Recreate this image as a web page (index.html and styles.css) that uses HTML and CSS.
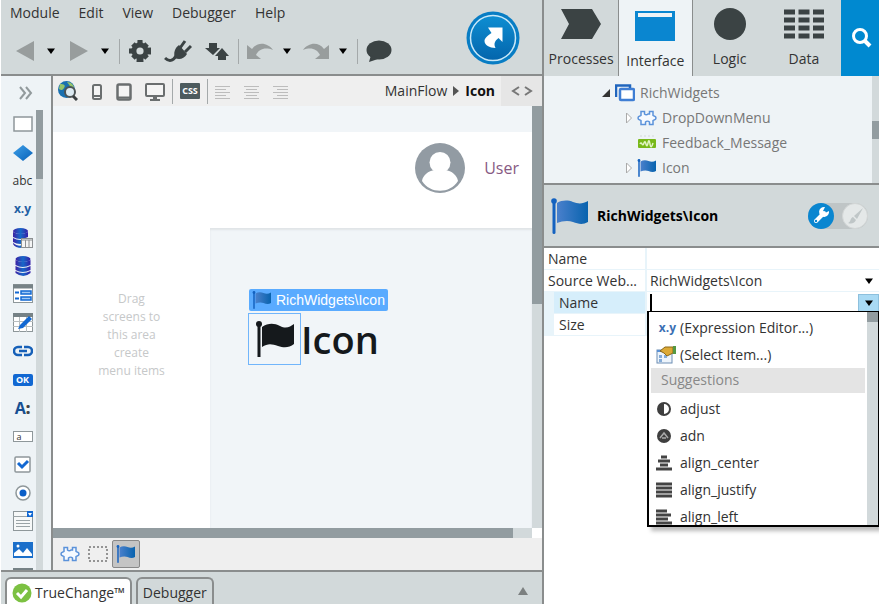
FILE: index.html
```html
<!DOCTYPE html>
<html lang="en">
<head>
  <meta charset="UTF-8" />
  <meta name="viewport" content="width=device-width, initial-scale=1.0"/>
  <title>Module - Icon</title>
  <link rel="stylesheet" href="styles.css">
</head>
<body>

  <!-- shared icons -->
  <svg class="sprite" aria-hidden="true">
    <defs>
      <linearGradient id="flagBlue" x1="0" x2="1"><stop offset="0" stop-color="#4a80cc"/><stop offset="1" stop-color="#0863ae"/></linearGradient>
      <linearGradient id="gemBlue" x1="0" x2="1" y2="1"><stop offset="0" stop-color="#3fa0e8"/><stop offset="1" stop-color="#0660b8"/></linearGradient>
      <linearGradient id="publishBlue" y2="1" x2="0"><stop offset="0" stop-color="#0e8ed2"/><stop offset="1" stop-color="#0465ac"/></linearGradient>
      <linearGradient id="dbBlue" x1="0" x2="1"><stop offset="0" stop-color="#3c22a4"/><stop offset=".5" stop-color="#1768c8"/><stop offset="1" stop-color="#3420a8"/></linearGradient>
    </defs>
    <symbol id="flag" viewBox="0 0 38 36">
      <rect x="1.500" y="3" width="3" height="33" rx="1.500" fill="#1462c0"/>
      <circle cx="3" cy="3" r="2.800" fill="#1462c0"/>
      <path d="M6 5C11 2 17 2 22 4s10 2 15-1v21c-5 3-10 2-15 0s-11-1-16 1z" fill="url(#flagBlue)"/>
    </symbol>
    <symbol id="flag-dark" viewBox="0 0 38 36">
      <rect x="1.500" y="3" width="3" height="33" fill="#15191c"/>
      <circle cx="3" cy="3" r="3" fill="#15191c"/>
      <path d="M6 6C12 2 18 2 24 5s10 1 14-2v20c-5 4-10 4-16 2s-10-3-16 1z" fill="#15191c"/>
    </symbol>
    <symbol id="puzzle" viewBox="0 0 20 16">
      <path d="M4 1.500h3.500v2.500c1 1 2.500 1 3.500 0h1.500V1.500H16v4c.5 1 3 0 3 2.500s-2.500 1.500-3 2.500v4h-3.500V12c-1-1-3-1-4 0v2.500H4v-4c-.5-1-3 0-3-2.500s2.500-1.500 3-2.500z" fill="#f6faff" stroke="#5b92da" stroke-width="1.500"/>
    </symbol>
    <symbol id="down" viewBox="0 0 8 6"><path d="M0 .5h8L4 6z" fill="#000"/></symbol>
  </svg>

  <div class="studio">
    <main class="workspace">

      <header class="topbar">
        <div class="topbar-main">
          <nav class="menu">
            <button>Module</button>
            <button>Edit</button>
            <button>View</button>
            <button>Debugger</button>
            <button>Help</button>
          </nav>
          <div class="tools">
            <button aria-label="Back"><svg width="20" height="22"><path d="M1 11 19 1v20z" fill="#989d9d"/></svg></button>
            <button class="narrow" aria-label="Back history"><svg width="8" height="6"><use href="#down"/></svg></button>
            <button aria-label="Forward"><svg width="20" height="22"><path d="M19 11 1 1v20z" fill="#989d9d"/></svg></button>
            <button class="narrow" aria-label="Forward history"><svg width="8" height="6"><use href="#down"/></svg></button>
            <span class="divider"></span>
            <button aria-label="Settings"><svg width="24" height="24" viewBox="0 0 24 24"><g fill="#3b4344"><path d="M9.500 1h5l1 22h-7zM1 9.500v5l22 1v-7z"/><path d="M9.500 2h5v20h-5zM2 9.500h20v5H2z" transform="rotate(45 12 12)"/><circle cx="12" cy="12" r="8.500"/></g><circle cx="12" cy="12" r="3.600" fill="#d2d9da"/></svg></button>
            <button aria-label="Connect"><svg width="28" height="24" viewBox="0 0 28 24"><path d="M1 19c4 4 8 3 11-2" fill="none" stroke="#3b4344" stroke-width="3"/><path d="m15 6 8 9c-3 5-8 6-12 4-2-5 0-10 4-13z" fill="#3b4344"/><path d="m16 9 5-7m0 11 6-6" stroke="#3b4344" stroke-width="3"/></svg></button>
            <button aria-label="Merge"><svg width="26" height="24" viewBox="0 0 26 24"><path d="M5 4h8v5h3l-7 7-8-7h4zM18 9l7 8h-3v4h-8v-4h-3z" fill="#3b4344"/></svg></button>
            <span class="divider"></span>
            <div class="history">
              <button aria-label="Undo"><svg width="26" height="18" viewBox="0 0 26 18"><path d="M0 3v14h14l-5-4c3-6 9-8 17-5C21 1 11-1 5 7z" fill="#989d9d"/></svg></button>
              <button class="narrow" aria-label="Undo history"><svg width="8" height="6"><use href="#down"/></svg></button>
              <button aria-label="Redo"><svg width="26" height="18" viewBox="0 0 26 18"><path d="M26 3v14H12l5-4C14 7 8 5 0 8 5 1 15-1 21 7z" fill="#989d9d"/></svg></button>
              <button class="narrow" aria-label="Redo history"><svg width="8" height="6"><use href="#down"/></svg></button>
            </div>
            <span class="divider"></span>
            <button aria-label="Feedback"><svg width="26" height="22" viewBox="0 0 26 22"><ellipse cx="13" cy="10" rx="12.500" ry="9.500" fill="#3b4344"/><path d="m5 15-2 7 9-3z" fill="#3b4344"/></svg></button>
          </div>
        </div>
        <button class="publish" aria-label="Publish">
          <svg width="54" height="54" viewBox="0 0 54 54"><circle cx="27" cy="27" r="26.500" fill="#087dc4"/><circle cx="27" cy="27" r="22.500" fill="url(#publishBlue)" stroke="#c9e8f8" stroke-width="1.500"/><path d="M22 16.500h14.500V31l-4-4c-4 3-5 6-3 10-6 0-11-3-11-7 0-3 3-5 7-8z" fill="#fff"/></svg>
        </button>
      </header>

      <div class="editor">
        <aside class="palette">
          <button class="expand" aria-label="Expand toolbox"><svg width="14" height="14"><path d="m1 1 5 6-5 6M7 1l5 6-5 6" fill="none" stroke="#929a9c" stroke-width="2"/></svg></button>
          <div class="palette-body">
            <div class="widgets">
              <button aria-label="Container"><svg width="20" height="20"><rect x="1" y="3" width="18" height="14" fill="#fff" stroke="#8e979a" stroke-width="1.500"/></svg></button>
              <button aria-label="If"><svg width="20" height="20"><path d="m10 2 10 8-10 8-10-8z" fill="url(#gemBlue)"/></svg></button>
              <button class="word">abc</button>
              <button class="word expr">x.y</button>
              <button aria-label="Table records"><svg width="20" height="20"><g fill="url(#dbBlue)"><ellipse cx="7.500" cy="3" rx="7.500" ry="3"/><path d="M0 4q7 4 15 0v5q-8 4-15 0zM0 10q7 4 15 0v4q-8 4-15 0zM0 15q5 4 9 2v3q-7 0-9-4z"/></g><rect x="8.500" y="10.500" width="11" height="9" fill="#f4f5f5" stroke="#8c9092"/><path d="M8 12h12M12.500 12v8M16 12v8" stroke="#8c9092"/></svg></button>
              <button aria-label="List records"><svg width="20" height="20"><g fill="url(#dbBlue)"><ellipse cx="10" cy="3" rx="7.500" ry="3"/><path d="M2.500 4q7 4 15 0v5q-8 4-15 0zM2.500 10q7 4 15 0v4q-8 4-15 0zM2.500 15q7 4 15 0v2q-7 6-15 0z"/></g></svg></button>
              <button aria-label="Form"><svg width="20" height="20"><rect x=".5" y=".5" width="19" height="18" fill="#fff" stroke="#8e979a"/><path d="M0 2.500h20" stroke="#768286" stroke-width="4"/><g fill="#9fc8f4" stroke="#1268d2" stroke-width="1.500"><rect x="8" y="7" width="10" height="3"/><rect x="8" y="13" width="10" height="3"/></g><path d="M2 8.500h4m-4 6h4" stroke="#1268d2" stroke-width="2"/></svg></button>
              <button aria-label="Edit record"><svg width="20" height="20"><rect x=".5" y=".5" width="19" height="18" fill="#fff" stroke="#8e979a"/><path d="M6.500 2v17M13.500 2v17M0 8.500h20M0 13.500h20" stroke="#b8bec0"/><path d="M0 2h20" stroke="#768286" stroke-width="4"/><path d="m5 16 2-4 9-9 3 3-9 9z" fill="#1268d2"/></svg></button>
              <button aria-label="Link"><svg width="20" height="12"><path d="M9 2H5a4 4 0 0 0 0 8h4m2-8h4a4 4 0 0 1 0 8h-4M6 6h8" fill="none" stroke="#1660b8" stroke-width="2.500"/></svg></button>
              <button aria-label="Button"><span class="ok">OK</span></button>
              <button class="word label">A<b>:</b></button>
              <button aria-label="Input"><span class="field">a</span></button>
              <button aria-label="Check Box"><svg width="18" height="18"><rect x="1" y="1" width="15" height="15" rx="1" fill="#fff" stroke="#8e979a" stroke-width="1.500"/><path d="m4 7 4 4 6-6" fill="none" stroke="#1268d2" stroke-width="3"/></svg></button>
              <button aria-label="Radio Button"><svg width="18" height="18"><circle cx="9" cy="9" r="7" fill="#fff" stroke="#8e979a" stroke-width="1.500"/><circle cx="9" cy="9" r="3.500" fill="#0b5fc8"/></svg></button>
              <button aria-label="Combo Box"><svg width="20" height="20"><rect x=".5" y=".5" width="19" height="19" fill="#f6f8f8" stroke="#8e979a"/><path d="M0 5.500h20M3 9.500h14M3 12.500h14M3 15.500h14" stroke="#9aa3a6"/><path d="M14 0h6v6h-6z" fill="#1268d2"/><path d="M15 2h4l-2 3z" fill="#fff"/></svg></button>
              <button aria-label="Image"><svg width="20" height="16"><path d="M0 0h20v16H0z" fill="#1b6fca"/><path d="M1 14v-3l5-4 4 4 4-5 5 6v2z" fill="#fff"/><circle cx="5" cy="4" r="1.500" fill="#fff"/></svg></button>
              <span class="next"></span>
            </div>
            <div class="bar"><div class="thumb"></div></div>
          </div>
        </aside>

        <section class="screen">
          <div class="screen-tools">
            <button aria-label="Preview"><svg width="20" height="20"><circle cx="8.500" cy="8.500" r="8.500" fill="#1970b0"/><path d="M2 3c4 0 6 1 4 4s-3 2-5 1M9 1c4 0 7 3 7 6l-4-2z" fill="#94c46c"/><circle cx="12" cy="11" r="5" fill="#dceaf2" stroke="#4d5456" stroke-width="2"/><path d="m15 15 4 4" stroke="#3b4042" stroke-width="3"/></svg></button>
            <button aria-label="Phone"><svg width="12" height="20"><rect x="2" y="4" width="8" height="14" rx="1.500" fill="#f4f4f4" stroke="#6a6e6f" stroke-width="2"/><path d="M2 15h8" stroke="#6a6e6f" stroke-width="2"/></svg></button>
            <button aria-label="Tablet"><svg width="16" height="20"><rect x="1.500" y="3.500" width="13" height="15" rx="1.500" fill="#f4f4f4" stroke="#6a6e6f" stroke-width="2.500"/><path d="M1 16.500h14" stroke="#6a6e6f" stroke-width="2"/></svg></button>
            <button aria-label="Desktop"><svg width="20" height="20"><rect x="1" y="3" width="18" height="12" rx="1" fill="#f4f4f4" stroke="#6a6e6f" stroke-width="2"/><path d="M8 15h4v3h3v2H5v-2h3z" fill="#6a6e6f"/></svg></button>
            <span class="divider"></span>
            <button class="css">CSS</button>
            <span class="divider"></span>
            <button aria-label="Align left"><svg width="16" height="18"><path d="M0 4.500h15M0 7.500h11M0 10.500h15M0 13.500h11M0 16.500h15" stroke="#bcbcbc"/></svg></button>
            <button aria-label="Align center"><svg width="16" height="18"><path d="M0 4.500h15M2 7.500h11M0 10.500h15M2 13.500h11M0 16.500h15" stroke="#bcbcbc"/></svg></button>
            <button aria-label="Align right"><svg width="16" height="18"><path d="M0 4.500h15M4 7.500h11M0 10.500h15M4 13.500h11M0 16.500h15" stroke="#bcbcbc"/></svg></button>
            <div class="crumbs">MainFlow <svg width="6" height="10"><path d="M0 0v10l6-5z" fill="#555"/></svg> <strong>Icon</strong></div>
            <button class="source" aria-label="Source"><svg width="22" height="10"><path d="M8 1 2 5l6 4M14 1l6 4-6 4" fill="none" stroke="#777" stroke-width="2"/></svg></button>
          </div>

          <div class="viewport">
            <div class="page">
              <div class="page-header">
                <svg width="52" height="52" viewBox="0 0 52 52"><circle cx="26" cy="26" r="25" fill="#929ba3"/><circle cx="26" cy="20.500" r="10.500" fill="#fff"/><path d="M8 39c1-6 6-10 13-11l1-3h8l1 3c7 1 12 5 13 11-8 13-28 13-36 0z" fill="#fff"/></svg>
                <a href="#">User</a>
              </div>
              <div class="page-body">
                <div class="drop-area">Drag<br>screens to<br>this area<br>create<br>menu items</div>
                <div class="content">
                  <div class="tag"><svg width="20" height="18"><use href="#flag"/></svg>RichWidgets\Icon</div>
                  <h1><span class="selected"><svg width="40" height="36"><use href="#flag-dark"/></svg></span>Icon</h1>
                </div>
              </div>
            </div>
            <div class="bar tall"><div class="thumb"></div></div>
            <div class="bar wide"><div class="thumb"></div></div>
          </div>

          <div class="element-path">
            <button aria-label="Block"><svg width="20" height="16"><use href="#puzzle"/></svg></button>
            <button aria-label="Placeholder"><svg width="20" height="16"><rect x="1" y="1" width="18" height="14" fill="none" stroke="#777" stroke-width="1.500" stroke-dasharray="2"/></svg></button>
            <button class="active" aria-label="Icon"><svg width="20" height="18"><use href="#flag"/></svg></button>
          </div>
        </section>
      </div>

      <footer class="tabs">
        <button class="tab open"><svg width="20" height="20"><circle cx="10" cy="10" r="9.500" fill="#7cc142"/><path d="m5 10 4 4 6-7" fill="none" stroke="#fff" stroke-width="3"/></svg>TrueChange™</button>
        <button class="tab">Debugger</button>
        <button class="collapse" aria-label="Expand"><svg width="10" height="8"><path d="M0 8h10L5 0z" fill="#7c8080"/></svg></button>
      </footer>
    </main>

    <aside class="inspector">
      <nav class="layers">
        <button><svg width="40" height="32"><path d="M0 1h31l9 15-9 15H0l8-15z" fill="#3b4344"/></svg>Processes</button>
        <button class="current"><svg width="40" height="32"><path d="M0 1h40v30H0z" fill="#0a86d0"/><path d="M3 3h34v4H3z" fill="#eef3f6"/></svg>Interface</button>
        <button><svg width="40" height="32"><circle cx="20" cy="16" r="16" fill="#3b4344"/></svg>Logic</button>
        <button><svg width="40" height="32"><path d="M0 4h40M0 12h40M0 20h40M0 28h40" stroke="#3b4344" stroke-width="5" stroke-dasharray="11 3.500"/></svg>Data</button>
        <button class="search" aria-label="Search"><svg width="22" height="22"><circle cx="9" cy="9" r="6.500" fill="none" stroke="#fff" stroke-width="3"/><path d="m13 13 6 6" stroke="#fff" stroke-width="4"/></svg></button>
      </nav>

      <div class="tree-pane">
        <ul class="tree">
          <li><svg class="arrow" width="8" height="10"><path d="M8 1v8H0z" fill="#333"/></svg><svg width="20" height="18"><path d="M1 13V1.500h14V4" fill="none" stroke="#2065bd" stroke-width="2.500"/><rect x="5" y="5" width="14" height="11" rx="1" fill="#fff" stroke="#3f7ed4" stroke-width="2.500"/></svg>RichWidgets</li>
          <li class="child"><svg class="arrow" width="6" height="12"><path d="M.5 1v10l5-5z" fill="#fff" stroke="#aaa"/></svg><svg width="20" height="16"><use href="#puzzle"/></svg>DropDownMenu</li>
          <li class="child"><span class="arrow"></span><svg width="20" height="16"><rect x="1" y="4" width="18" height="9" rx="1" fill="#78b81a"/><path d="M3 9q1-2 2 0t2-1 2 1 2-1 2 1 3-1" fill="none" stroke="#e2f4c4" stroke-width="1.500"/><path d="M3 1h14" stroke="#d4d8da" stroke-dasharray="2"/></svg>Feedback_Message</li>
          <li class="child"><svg class="arrow" width="6" height="12"><path d="M.5 1v10l5-5z" fill="#fff" stroke="#aaa"/></svg><svg width="20" height="18"><use href="#flag"/></svg>Icon</li>
        </ul>
        <div class="bar"><div class="thumb"></div></div>
      </div>

      <div class="properties-head">
        <svg width="38" height="36"><use href="#flag"/></svg>
        <h2>RichWidgets\Icon</h2>
        <div class="switch">
          <button aria-label="Properties"><svg width="26" height="26"><circle cx="13" cy="13" r="13" fill="#0a86d0"/><path d="m8 18 8-8" stroke="#fff" stroke-width="4" stroke-linecap="round"/><path d="M21 8a5 5 0 1 1-4-4l-2 4 2 2z" fill="#fff"/><circle cx="8" cy="18" r="1.200" fill="#0a86d0"/></svg></button>
          <button aria-label="Styles"><svg width="26" height="26"><circle cx="13" cy="13" r="12.500" fill="#e4e8e8" stroke="#d2d6d6"/><path d="m21 5-9 8 3 3zM11 14l3 3c-2 4-5 4-8 3 3-1 2-5 5-6z" fill="#bfc6c7"/></svg></button>
        </div>
      </div>

      <div class="properties">
        <table>
          <tr>
            <th><label for="name">Name</label></th>
            <td><input id="name" type="text"></td>
          </tr>
          <tr>
            <th><label for="source">Source Web...</label></th>
            <td><div class="combo"><select id="source"><option>RichWidgets\Icon</option></select><svg width="8" height="8"><use href="#down"/></svg></div></td>
          </tr>
          <tr class="sub focused">
            <th><label for="icon-name">Name</label></th>
            <td><div class="combo"><span class="caret"></span><input id="icon-name" type="text"><button aria-label="Open list"><svg width="8" height="8"><use href="#down"/></svg></button></div></td>
          </tr>
          <tr class="sub">
            <th><label for="size">Size</label></th>
            <td><input id="size" type="text"></td>
          </tr>
        </table>

        <div class="suggestions">
          <ul>
            <li><button><span class="xy">x.y</span>(Expression Editor...)</button></li>
            <li><button><span class="pic"><svg width="20" height="18"><rect x="1" y="4" width="15" height="13" fill="#edf4fb" stroke="#6d8eb4"/><path d="M1 5h15" stroke="#5b91d4" stroke-width="2"/><path d="M3 9h3v3H3zm5 0h3v3H8zm-5 4h3v3H3z" fill="#85acd8"/><path d="m4 5 5-4h8v6l-6 3-3-3z" fill="#dca936" stroke="#8a6818"/><path d="M17 0h3v8h-3z" fill="#549844"/></svg></span>(Select Item...)</button></li>
            <li class="group">Suggestions</li>
            <li><button><span class="pic"><svg width="16" height="16"><circle cx="8" cy="8" r="6" fill="#fff" stroke="#3f3f3f" stroke-width="2"/><path d="M8 2a6 6 0 0 0 0 12z" fill="#3f3f3f"/></svg></span>adjust</button></li>
            <li><button><span class="pic"><svg width="16" height="16"><circle cx="8" cy="8" r="7" fill="#3f3f3f"/><path d="m4 10 4-5 4 5M6 10h4" fill="none" stroke="#aaa" stroke-width="1.500"/></svg></span>adn</button></li>
            <li><button><span class="pic"><svg width="16" height="16"><path d="M5 2h6M2 6h12M4 10h8M0 14h16" stroke="#444" stroke-width="3"/></svg></span>align_center</button></li>
            <li><button><span class="pic"><svg width="16" height="16"><path d="M0 2h16M0 6h16M0 10h16M0 14h16" stroke="#444" stroke-width="3"/></svg></span>align_justify</button></li>
            <li><button><span class="pic"><svg width="16" height="16"><path d="M0 2h11M0 6h15M0 10h12M0 14h16" stroke="#444" stroke-width="3"/></svg></span>align_left</button></li>
          </ul>
          <div class="bar"><div class="thumb"></div></div>
        </div>
      </div>
    </aside>
  </div>

</body>
</html>
```
FILE: styles.css
```css
* {
  box-sizing: border-box;
}
body {
  margin: 0;
  font-family: "Open Sans", "Noto Sans", sans-serif;
  font-size: 14px;
  line-height: 20px;
  color: #333;
  background: #fff;
}
button, input, select {
  font: inherit;
  color: inherit;
  border: 0;
  padding: 0;
  background: none;
}
button {
  display: flex;
  align-items: center;
  justify-content: center;
}
svg {
  display: block;
  flex: none;
}
ul, h1, h2 {
  margin: 0;
  padding: 0;
  list-style: none;
}
.sprite {
  position: absolute;
  width: 0;
  height: 0;
}
.studio {
  display: flex;
  height: 100vh;
}

/* scroll bars */
.bar {
  width: 7px;
  flex: none;
  background: #d2d9db;
}
.thumb {
  background: #929ca0;
}
.divider {
  width: 1px;
  height: 25px;
  background: #a4a9aa;
}

/* left side */
.workspace {
  flex: 1;
  min-width: 0;
  display: flex;
  flex-direction: column;
  border-left: 1px solid #fff;
  background: #d2d9da;
}
.topbar {
  display: flex;
  justify-content: space-between;
  height: 76px;
  border-bottom: 2px solid #8a8d8d;
}
.menu {
  display: flex;
  gap: 19px;
  padding: 3px 9px;
}
.tools {
  display: flex;
  align-items: center;
  height: 50px;
  padding-left: 14px;
  gap: 12px;
}
.tools .divider {
  margin: 0 -4px;
}
.tools .narrow {
  padding-right: 2px;
}
.history {
  display: flex;
  align-items: center;
  gap: 10px;
}
.publish {
  align-self: flex-start;
  padding: 11px 22px 0 0;
}
.editor {
  flex: 1;
  min-height: 0;
  display: flex;
}
.palette {
  display: flex;
  flex-direction: column;
  width: 52px;
  border-right: 2px solid #8a8d8d;
  background: #eef3f6;
}
.expand {
  height: 34px;
}
.palette-body {
  flex: 1;
  min-height: 0;
  display: flex;
}
.palette-body .thumb {
  height: 15%;
}
.widgets {
  width: 35px;
  padding-left: 8px;
  display: flex;
  flex-direction: column;
}
.widgets button {
  flex: 1;
  min-height: 0;
}
.widgets .word {
  font-size: 12px;
}
.widgets .expr {
  color: #2460a4;
  font-weight: 700;
}
.widgets .label {
  color: #174f92;
  font-size: 16px;
  font-weight: 700;
}
.label b {
  color: #444;
}
.ok {
  width: 20px;
  border-radius: 2px;
  background: #1268d2;
  color: #fff;
  font-size: 9px;
  font-weight: 700;
  line-height: 12px;
}
.field {
  width: 20px;
  padding-left: 3px;
  border: 1px solid #8e979a;
  background: #fff;
  font-size: 9px;
  line-height: 9px;
  text-align: left;
}
.next {
  height: 2px;
  margin: 4px 0 0 4px;
  width: 20px;
  background: #768286;
}
.screen {
  flex: 1;
  min-width: 0;
  display: flex;
  flex-direction: column;
}
.screen-tools {
  display: flex;
  align-items: center;
  height: 30px;
  padding-left: 5px;
  gap: 13px;
  background: #efefef;
}
.screen-tools .divider {
  margin: 0 -6px;
}
.screen-tools .css {
  width: 20px;
  height: 16px;
  border-radius: 1px;
  background: #4d5b5e;
  color: #fff;
  font-size: 9px;
  font-weight: 700;
}
.crumbs {
  display: flex;
  align-items: center;
  gap: 6px;
  margin-left: auto;
}
.crumbs strong {
  color: #111;
}
.screen-tools .source {
  align-self: stretch;
  width: 41px;
  margin-left: -7px;
  background: #e6e6e6;
}
.viewport {
  flex: 1;
  min-height: 0;
  display: grid;
  grid-template-columns: 1fr 10px;
  grid-template-rows: 1fr 10px;
  background: #fff;
}
.bar.tall {
  width: auto;
}
.tall .thumb {
  height: 47%;
}
.bar.wide {
  width: auto;
}
.wide .thumb {
  width: 96%;
  height: 100%;
}
.page {
  min-width: 0;
  display: flex;
  flex-direction: column;
  padding-top: 26px;
  background: #f1f5f8;
}
.page-header {
  display: flex;
  align-items: center;
  justify-content: flex-end;
  gap: 18px;
  height: 96px;
  padding: 0 13px 24px 0;
  background: #fff;
}
.page-header a {
  color: #875a83;
  font-size: 16px;
  text-decoration: none;
}
.page-body {
  flex: 1;
  display: flex;
}
.drop-area {
  width: 157px;
  padding-top: 62px;
  background: #fff;
  color: #c6c8c9;
  font-size: 12px;
  line-height: 18px;
  text-align: center;
}
.content {
  flex: 1;
  padding: 61px 0 0 38px;
  box-shadow: inset 0 2px 2px #e0e4e7;
}
.tag {
  display: flex;
  align-items: center;
  gap: 4px;
  width: max-content;
  height: 22px;
  margin: 0 0 2px 1px;
  padding: 0 3px;
  border-radius: 2px;
  background: #5aabff;
  color: #fff;
  font-family: "Liberation Sans", Arial, sans-serif;
  font-size: 14px;
}
.content h1 {
  display: flex;
  align-items: center;
  color: #15191c;
  font-size: 38px;
  font-weight: 600;
  line-height: 52px;
}
.selected {
  display: flex;
  align-items: center;
  justify-content: center;
  width: 53px;
  height: 52px;
  border: 1px solid #71b5fb;
}
.element-path {
  display: flex;
  align-items: center;
  gap: 8px;
  height: 32px;
  padding-left: 7px;
  background: #efefef;
}
.element-path .active {
  width: 28px;
  height: 28px;
  margin-left: -4px;
  border: 1px solid #888;
  border-radius: 2px;
  background: #c4c4c4;
}
.tabs {
  display: flex;
  gap: 4px;
  height: 34px;
  padding: 5px 14px 0 4px;
  border-top: 2px solid #8a8d8d;
}
.tab {
  gap: 3px;
  height: 30px;
  padding: 0 5px;
  border: 2px solid #8a8d8d;
  border-bottom: 0;
  border-radius: 6px 6px 0 0;
}
.tab.open {
  background: #fff;
}
.collapse {
  margin-left: auto;
}

/* right side */
.inspector {
  display: flex;
  flex-direction: column;
  width: 337px;
  border-left: 2px solid #8a8d8d;
}
.layers {
  display: grid;
  grid-template-columns: repeat(4, 1fr) 38px;
  height: 76px;
  background: #d2d9da;
}
.layers button {
  flex-direction: column;
  justify-content: flex-start;
  gap: 9px;
  padding-top: 8px;
}
.layers .current {
  padding-top: 10px;
  border: 1px solid #8a8d8d;
  border-width: 0 1px;
  background: #eef3f6;
}
.layers .search {
  justify-content: center;
  padding: 0 0 0 4px;
  background: #0089d0;
}
.tree-pane {
  display: flex;
  height: 109px;
  border-bottom: 2px solid #8a8d8d;
  background: #eef3f6;
}
.tree-pane .thumb {
  height: 18px;
  margin-top: 45px;
}
.tree {
  flex: 1;
  padding: 4px 0 0 58px;
  color: #777;
}
.tree li {
  display: flex;
  align-items: center;
  gap: 5px;
  height: 25px;
}
.tree .child {
  padding-left: 24px;
}
.tree .child .arrow {
  width: 6px;
}
.properties-head {
  display: flex;
  align-items: center;
  height: 63px;
  padding: 0 11px 0 7px;
  border-bottom: 2px solid #8a8d8d;
  background: #d2d9da;
}
.properties-head h2 {
  margin-left: 8px;
  color: #000;
  font-size: 14px;
}
.switch {
  display: flex;
  gap: 8px;
  margin-left: auto;
  border-radius: 13px;
  background: #bfc5c6;
}
.properties {
  position: relative;
  flex: 1;
}
.properties table {
  width: 100%;
  border-spacing: 0;
  table-layout: fixed;
}
.properties th {
  width: 103px;
  height: 22px;
  padding: 0 0 0 4px;
  border-right: 2px solid #e8f4fa;
  border-bottom: 1px solid #e8f4fa;
  font-weight: 400;
  text-align: left;
  white-space: nowrap;
}
.properties td {
  height: 22px;
  padding: 0;
  border-bottom: 1px solid #e8f4fa;
}
.properties .sub th {
  padding-left: 5px;
  border-left: 10px solid #e8f4fa;
}
.properties .focused th {
  background: #d6eefb;
}
.properties input,
.properties select {
  display: block;
  width: 100%;
  height: 20px;
  outline: 0;
  appearance: none;
}
.properties select {
  padding-left: 3px;
}
.combo {
  display: flex;
  align-items: center;
}
.combo > svg {
  margin-right: 6px;
}
.combo button {
  flex: none;
  width: 21px;
  height: 18px;
  border: 1px solid #8dc0dd;
  background: #a9daf4;
}
.caret {
  flex: none;
  width: 2px;
  height: 18px;
  margin-left: 3px;
  background: #000;
}
.suggestions {
  position: absolute;
  top: 63px;
  left: 103px;
  right: 0;
  display: flex;
  height: 216px;
  border: 2px solid #000;
  border-width: 1px 1px 2px 2px;
  background: #fff;
  box-shadow: 4px 4px 4px #bbb;
}
.suggestions ul {
  flex: 1;
  overflow: hidden;
  padding: 2px 2px 0;
}
.suggestions li {
  height: 27px;
}
.suggestions li button {
  justify-content: flex-start;
  gap: 4px;
  width: 100%;
  height: 27px;
  padding-left: 5px;
  white-space: nowrap;
}
.suggestions .group {
  height: 25px;
  margin-bottom: 2px;
  padding: 2px 10px;
  background: #e4e4e4;
  color: #888;
}
.pic {
  width: 20px;
}
.xy {
  width: 20px;
  color: #3b70b4;
  font-size: 12px;
  font-weight: 700;
  text-align: right;
}
.suggestions .bar {
  width: 11px;
}
.suggestions .thumb {
  height: 10px;
}
```
